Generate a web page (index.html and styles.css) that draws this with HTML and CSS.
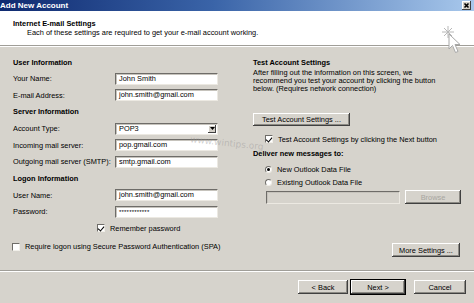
FILE: index.html
```html
<!DOCTYPE html>
<html lang="en">
<head>
    <meta charset="UTF-8">
    <title>Add New Account</title>
    <link rel="stylesheet" href="styles.css">
</head>
<body>
<div class="dialog">
    <div class="titlebar">
        <span class="title">Add New Account</span>
        <span class="close">
            <svg width="9" height="9" viewBox="0 0 9 9"><path d="M2.5 2.5 L6.5 6.5 M6.5 2.5 L2.5 6.5" stroke="#000" stroke-width="1.6"/></svg>
        </span>
    </div>

    <div class="header">
        <div class="header-title">Internet E-mail Settings</div>
        <div class="header-sub">Each of these settings are required to get your e-mail account working.</div>
        <!-- sparkle cursor graphic -->
        <svg class="header-icon" width="22" height="32" viewBox="0 0 22 32">
            <g stroke="#b8b8b8" stroke-width="1">
                <path d="M6 2 V14 M0 8 H12 M2 4 L10 12 M10 4 L2 12"/>
            </g>
            <path d="M7 10 L7 25 L10.5 21.5 L13.5 28.5 L16 27.5 L13 20.5 L18 20.5 Z" fill="#fff" stroke="#a8a8a8" stroke-width="1"/>
        </svg>
    </div>

    <div class="content">
        <div class="col left">
            <div class="grid">
                <div class="section">User Information</div>
                <div class="field"><label>Your Name:</label><div class="input">John Smith</div></div>
                <div class="field"><label>E-mail Address:</label><div class="input">john.smith@gmail.com</div></div>
                <div class="section">Server Information</div>
                <div class="field"><label>Account Type:</label>
                    <div class="input select">POP3
                        <span class="drop"><svg width="5" height="3" viewBox="0 0 5 3"><path d="M0 0 H5 L2.5 3 Z" fill="#000"/></svg></span>
                    </div>
                </div>
                <div class="field"><label>Incoming mail server:</label><div class="input">pop.gmail.com</div></div>
                <div class="field"><label>Outgoing mail server (SMTP):</label><div class="input">smtp.gmail.com</div></div>
                <div class="section">Logon Information</div>
                <div class="field"><label>User Name:</label><div class="input">john.smith@gmail.com</div></div>
                <div class="field"><label>Password:</label><div class="input pass">************</div></div>
                <div class="check-row remember"><span class="checkbox checked"></span>Remember password</div>
            </div>
            <div class="check-row spa"><span class="checkbox"></span>Require logon using Secure Password Authentication (SPA)</div>
        </div>

        <div class="col right">
            <div class="section">Test Account Settings</div>
            <p class="note">After filling out the information on this screen, we recommend you test your account by clicking the button below. (Requires network connection)</p>
            <div class="btn test-btn">Test Account Settings ...</div>
            <div class="check-row indent test-check"><span class="checkbox checked"></span>Test Account Settings by clicking the Next button</div>
            <div class="section deliver">Deliver new messages to:</div>
            <div class="radio-row indent first"><span class="radio on"></span>New Outlook Data File</div>
            <div class="radio-row indent"><span class="radio"></span>Existing Outlook Data File</div>
            <div class="browse-row">
                <div class="input disabled"></div>
                <div class="btn disabled browse">Browse</div>
            </div>
            <div class="btn more">More Settings ...</div>
        </div>

        <div class="watermark">www.wintips.org</div>
    </div>

    <div class="footer">
        <div class="btn back">&lt; Back</div>
        <div class="btn next">Next &gt;</div>
        <div class="btn cancel">Cancel</div>
    </div>
</div>
</body>
</html>
```

FILE: styles.css
```css
body {
    margin: 0;
    font-family: 'Liberation Sans', Arial, sans-serif;
    font-size: 7.4px;
    color: #000;
    background-color: #d4d0c8;
}

.dialog {
    width: 474px;
    height: 303px;
    background-color: #d6d3cc;
    overflow: hidden;
    display: flex;
    flex-direction: column;
}

/* Title bar */
.titlebar {
    height: 11px;
    background: linear-gradient(to right, #0f2a70 0%, #3a64a8 45%, #a8c8ec 100%);
    display: flex;
    align-items: center;
    justify-content: space-between;
    padding: 0 3px 0 0;
}

.titlebar .title {
    color: #fff;
    font-weight: bold;
    font-size: 8px;
}

.close {
    width: 9px;
    height: 9px;
    background-color: #d4d0c8;
    box-shadow: inset -1px -1px #404040, inset 1px 1px #fff;
    display: flex;
}

/* White header */
.header {
    height: 35px;
    background-color: #fff;
    border-bottom: 1px solid #a09e98;
    box-shadow: 0 1px #fff;
    position: relative;
    padding-left: 13px;
    box-sizing: border-box;
    padding-top: 8px;
}

.header-title {
    font-weight: bold;
    height: 9px;
    line-height: 9px;
}

.header-sub {
    margin-left: 14px;
    line-height: 9px;
}

.header-icon {
    position: absolute;
    left: 442px;
    top: 13px;
}

/* Main content */
.content {
    flex: 1;
    display: flex;
    position: relative;
    padding-top: 8px;
    box-sizing: border-box;
    border-bottom: 1px solid #a09e98;
    box-shadow: 0 1px #fff;
}

.col {
    display: flex;
    flex-direction: column;
}

.left {
    width: 220px;
    padding-left: 13px;
    box-sizing: border-box;
}

.right {
    margin-left: 33px;
    width: 208px;
    padding-bottom: 13px;
}

.grid {
    display: grid;
    grid-auto-rows: 16.6px;
}

.section {
    font-weight: bold;
    display: flex;
    align-items: center;
    height: 16px;
}

.field {
    display: flex;
    align-items: center;
}

.field label {
    width: 102px;
    flex-shrink: 0;
    white-space: nowrap;
}

.input {
    width: 103px;
    height: 12px;
    box-sizing: border-box;
    background-color: #fff;
    border-top: 1px solid #6e6c68;
    border-left: 1px solid #6e6c68;
    border-right: 1px solid #ece9e2;
    border-bottom: 1px solid #ece9e2;
    box-shadow: inset 1px 1px #c6c3bc;
    padding-left: 3px;
    line-height: 10px;
    white-space: nowrap;
    overflow: hidden;
}

.select {
    display: flex;
    justify-content: space-between;
    padding-right: 1px;
}

.drop {
    width: 8px;
    height: 8px;
    margin-top: 1px;
    background-color: #d4d0c8;
    box-shadow: inset -1px -1px #404040, inset 1px 1px #fff;
    display: flex;
    align-items: center;
    justify-content: center;
}

.pass {
    letter-spacing: 0.2px;
    font-size: 6px;
}

.check-row, .radio-row {
    display: flex;
    align-items: center;
    white-space: nowrap;
}

.checkbox {
    width: 8px;
    height: 8px;
    box-sizing: border-box;
    background-color: #fff;
    border-top: 1px solid #6e6c68;
    border-left: 1px solid #6e6c68;
    border-right: 1px solid #f2f0ea;
    border-bottom: 1px solid #f2f0ea;
    margin-right: 5px;
    flex-shrink: 0;
    position: relative;
}

.checkbox.checked::after {
    content: '';
    position: absolute;
    left: 1px;
    top: 0;
    width: 3px;
    height: 5px;
    border-right: 1.5px solid #000;
    border-bottom: 1.5px solid #000;
    transform: rotate(40deg);
}

.remember {
    padding-left: 84px;
}

.spa {
    margin-top: 2px;
    height: 16px;
}

.spa .checkbox {
    margin-left: -1px;
}

/* Right column */
.note {
    margin: -1px 0 0 0;
    line-height: 8px;
    width: 192px;
}

.btn {
    background-color: #d6d3cc;
    box-sizing: border-box;
    box-shadow: inset -1px -1px #404040, inset 1px 1px #fff, inset -2px -2px #8c8a84;
    height: 14px;
    display: flex;
    align-items: center;
    justify-content: center;
    white-space: nowrap;
}

.test-btn {
    width: 97px;
    height: 13px;
    margin-top: 20px;
}

.indent {
    padding-left: 12px;
}

.test-check {
    height: 14px;
    margin-top: 6px;
}

.deliver {
    height: 14px;
}

.radio-row {
    height: 13px;
}

.radio-row.first {
    margin-top: 3px;
}

.radio {
    width: 7px;
    height: 7px;
    border-radius: 50%;
    box-sizing: border-box;
    background-color: #fff;
    border: 1px solid;
    border-color: #6e6c68 #f0eee8 #f0eee8 #6e6c68;
    margin-right: 5px;
    position: relative;
}

.radio.on::after {
    content: '';
    position: absolute;
    left: 1px;
    top: 1px;
    width: 3px;
    height: 3px;
    border-radius: 50%;
    background-color: #000;
}

.browse-row {
    display: flex;
    align-items: center;
    margin-left: 13px;
    margin-top: 1px;
}

.input.disabled {
    width: 134px;
    height: 13px;
    background-color: #d6d3cc;
}

.browse {
    width: 56px;
    margin-left: 5px;
    color: #a8a6a0;
}

.more {
    width: 68px;
    margin-top: auto;
    margin-left: 139px;
}

.watermark {
    position: absolute;
    left: 190px;
    top: 92px;
    font-family: 'DejaVu Sans', sans-serif;
    font-size: 9px;
    color: rgba(150, 150, 150, 0.45);
    transform: rotate(6deg);
}

/* Footer buttons */
.footer {
    flex: 0 0 32px;
    display: flex;
    justify-content: flex-end;
    align-items: flex-start;
    padding: 9px 8px 0 0;
    box-sizing: border-box;
}

.back {
    width: 50px;
}

.next {
    width: 54px;
    margin-left: 3px;
    box-shadow: 0 0 0 1px #000, inset -1px -1px #404040, inset 1px 1px #fff, inset -2px -2px #8c8a84;
}

.cancel {
    width: 52px;
    margin-left: 9px;
}
```
